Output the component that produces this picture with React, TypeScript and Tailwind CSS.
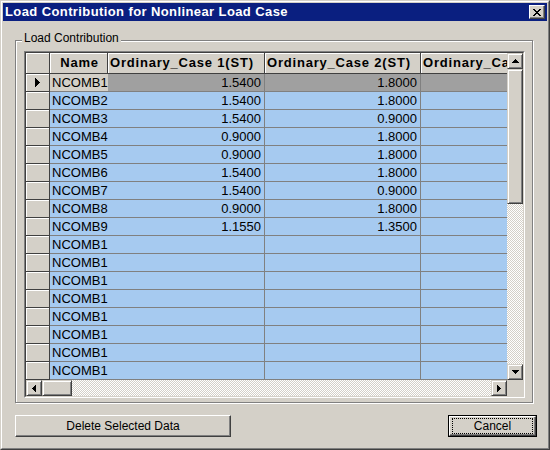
import React from "react";

const UI = "font-['Liberation_Sans',Arial,sans-serif]";
const CHECKER = "bg-[image:repeating-conic-gradient(#d4d0c8_0_25%,#ffffff_0_50%)] bg-[length:2px_2px]";

const ROWS: [string, string, string][] = [
  ["NCOMB1", "1.5400", "1.8000"],
  ["NCOMB2", "1.5400", "1.8000"],
  ["NCOMB3", "1.5400", "0.9000"],
  ["NCOMB4", "0.9000", "1.8000"],
  ["NCOMB5", "0.9000", "1.8000"],
  ["NCOMB6", "1.5400", "1.8000"],
  ["NCOMB7", "1.5400", "0.9000"],
  ["NCOMB8", "0.9000", "1.8000"],
  ["NCOMB9", "1.1550", "1.3500"],
  ["NCOMB1", "", ""],
  ["NCOMB1", "", ""],
  ["NCOMB1", "", ""],
  ["NCOMB1", "", ""],
  ["NCOMB1", "", ""],
  ["NCOMB1", "", ""],
  ["NCOMB1", "", ""],
  ["NCOMB1", "", ""],
];

function Arrow({ dir }: { dir: "up" | "down" | "left" | "right" }) {
  const px = [0, 1, 2, 3].map((i) => {
    if (dir === "up") return <rect key={i} x={3 - i} y={i} width={2 * i + 1} height={1} />;
    if (dir === "down") return <rect key={i} x={i} y={i} width={7 - 2 * i} height={1} />;
    if (dir === "left") return <rect key={i} x={i} y={3 - i} width={1} height={2 * i + 1} />;
    return <rect key={i} x={i} y={i} width={1} height={7 - 2 * i} />;
  });
  const vert = dir === "up" || dir === "down";
  return (
    <svg width={vert ? 7 : 4} height={vert ? 4 : 7} shapeRendering="crispEdges" fill="#000">
      {px}
    </svg>
  );
}

function ScrollBtn({ dir }: { dir: "up" | "down" | "left" | "right" }) {
  return (
    <div className="flex h-[16px] w-[16px] shrink-0 items-center justify-center border border-t-[#d4d0c8] border-l-[#d4d0c8] border-r-[#404040] border-b-[#404040] bg-[#d4d0c8] shadow-[inset_1px_1px_0_#fff,inset_-1px_-1px_0_#808080]">
      <Arrow dir={dir} />
    </div>
  );
}

function Thumb({ className }: { className: string }) {
  return (
    <div
      className={`shrink-0 border border-t-[#d4d0c8] border-l-[#d4d0c8] border-r-[#404040] border-b-[#404040] bg-[#d4d0c8] shadow-[inset_1px_1px_0_#fff,inset_-1px_-1px_0_#808080] ${className}`}
    />
  );
}

function HeaderCell({ w, children, center }: { w: string; children?: React.ReactNode; center?: boolean }) {
  return (
    <div
      className={`flex h-full shrink-0 items-center overflow-hidden whitespace-nowrap border-r border-b border-[#404040] bg-[#d4d0c8] pl-[2px] text-[13px] font-bold tracking-[0.8px] text-black shadow-[inset_1px_1px_0_#fff] ${w} ${
        center ? "justify-center" : ""
      }`}
    >
      {children}
    </div>
  );
}

function Grid() {
  return (
    <div className="h-[347px] w-[501px] border border-t-[#808080] border-l-[#808080] border-r-white border-b-white">
      <div className="flex h-full w-full flex-col border border-t-[#404040] border-l-[#404040] border-r-[#d4d0c8] border-b-[#d4d0c8]">
        <div className="flex h-[327px]">
          <div className="flex w-[481px] flex-col overflow-hidden">
            <div className="flex h-[21px] shrink-0">
              <HeaderCell w="w-[24px]" />
              <HeaderCell w="w-[58px]" center>
                Name
              </HeaderCell>
              <HeaderCell w="w-[157px]">Ordinary_Case 1(ST)</HeaderCell>
              <HeaderCell w="w-[156px]">Ordinary_Case 2(ST)</HeaderCell>
              <HeaderCell w="w-[120px]">Ordinary_Case 3(ST)</HeaderCell>
            </div>
            {ROWS.map((r, i) => {
              const cur = i === 0;
              const dataBg = cur ? "bg-[#a0a0a0]" : "bg-[#a6caf0]";
              return (
                <div key={i} className="flex h-[18px] shrink-0 text-[13px] leading-none text-black">
                  <div className="flex w-[24px] shrink-0 items-center justify-center border-r border-b border-[#404040] bg-[#d4d0c8] shadow-[inset_1px_1px_0_#fff]">
                    {cur && (
                      <svg width="5" height="9" shapeRendering="crispEdges" fill="#000">
                        <polygon points="0,0 5,4.5 0,9" />
                      </svg>
                    )}
                  </div>
                  <div
                    className={`flex w-[58px] shrink-0 items-center overflow-hidden whitespace-nowrap border-b border-[#808080] pl-[2px] ${
                      cur ? "bg-[#d4d0c8]" : "bg-[#a6caf0]"
                    }`}
                  >
                    {r[0]}
                  </div>
                  <div className={`flex w-[157px] shrink-0 items-center justify-end border-r border-b border-[#808080] pr-[3px] ${dataBg}`}>
                    {r[1]}
                  </div>
                  <div className={`flex w-[156px] shrink-0 items-center justify-end border-r border-b border-[#808080] pr-[3px] ${dataBg}`}>
                    {r[2]}
                  </div>
                  <div className={`w-[120px] shrink-0 border-r border-b border-[#808080] ${dataBg}`} />
                </div>
              );
            })}
          </div>
          <div className="flex w-[16px] flex-col">
            <ScrollBtn dir="up" />
            <Thumb className="h-[135px] w-[16px]" />
            <div className={`flex-1 ${CHECKER}`} />
            <ScrollBtn dir="down" />
          </div>
        </div>
        <div className="flex h-[16px]">
          <div className="flex w-[481px]">
            <ScrollBtn dir="left" />
            <Thumb className="h-[16px] w-[30px]" />
            <div className={`flex-1 ${CHECKER}`} />
            <ScrollBtn dir="right" />
          </div>
          <div className="w-[16px] bg-[#d4d0c8]" />
        </div>
      </div>
    </div>
  );
}

export default function App() {
  return (
    <div className={`h-[450px] w-[550px] ${UI}`}>
      <div className="h-full w-full border border-t-[#d4d0c8] border-l-[#d4d0c8] border-r-[#404040] border-b-[#404040] bg-[#d4d0c8]">
        <div className="flex h-full w-full flex-col border border-t-white border-l-white border-r-[#808080] border-b-[#808080] p-[1px]">
          <div className="flex h-[18px] shrink-0 items-center justify-between bg-[#0a1f80] pl-[2px] pr-[2px]">
            <span className="text-[13px] font-bold tracking-[0.4px] text-white">Load Contribution for Nonlinear Load Case</span>
            <div className="flex h-[14px] w-[16px] items-center justify-center border border-t-white border-l-white border-r-[#404040] border-b-[#404040] bg-[#d4d0c8] shadow-[inset_-1px_-1px_0_#808080]">
              <svg width="8" height="7" shapeRendering="crispEdges" fill="#000">
                <rect x="0" y="0" width="2" height="1" />
                <rect x="6" y="0" width="2" height="1" />
                <rect x="1" y="1" width="2" height="1" />
                <rect x="5" y="1" width="2" height="1" />
                <rect x="2" y="2" width="4" height="1" />
                <rect x="3" y="3" width="2" height="1" />
                <rect x="2" y="4" width="4" height="1" />
                <rect x="1" y="5" width="2" height="1" />
                <rect x="5" y="5" width="2" height="1" />
                <rect x="0" y="6" width="2" height="1" />
                <rect x="6" y="6" width="2" height="1" />
              </svg>
            </div>
          </div>

          <div className="relative ml-[12px] mt-[19px] h-[363px] w-[518px] shrink-0 border border-[#808080] pl-[8px] pt-[10px] shadow-[inset_1px_1px_0_#fff,1px_1px_0_#fff]">
            <span className="absolute left-[6px] top-[-10px] bg-[#d4d0c8] px-[2px] text-[12px] leading-[14px] text-black">
              Load Contribution
            </span>
            <Grid />
          </div>

          <div className="mt-[12px] flex justify-between pl-[12px] pr-[10px] text-[12px] text-black">
            <button className="flex h-[22px] w-[216px] items-center justify-center border border-t-white border-l-white border-r-[#404040] border-b-[#404040] bg-[#d4d0c8] shadow-[inset_-1px_-1px_0_#808080]">
              Delete Selected Data
            </button>
            <button className="h-[22px] w-[89px] border border-black bg-[#d4d0c8] p-0">
              <div className="flex h-full w-full border border-t-white border-l-white border-r-[#404040] border-b-[#404040] px-[2px] py-[1px] shadow-[inset_-1px_-1px_0_#808080]">
                <div className="flex flex-1 items-center justify-center border border-dotted border-black">Cancel</div>
              </div>
            </button>
          </div>
        </div>
      </div>
    </div>
  );
}
